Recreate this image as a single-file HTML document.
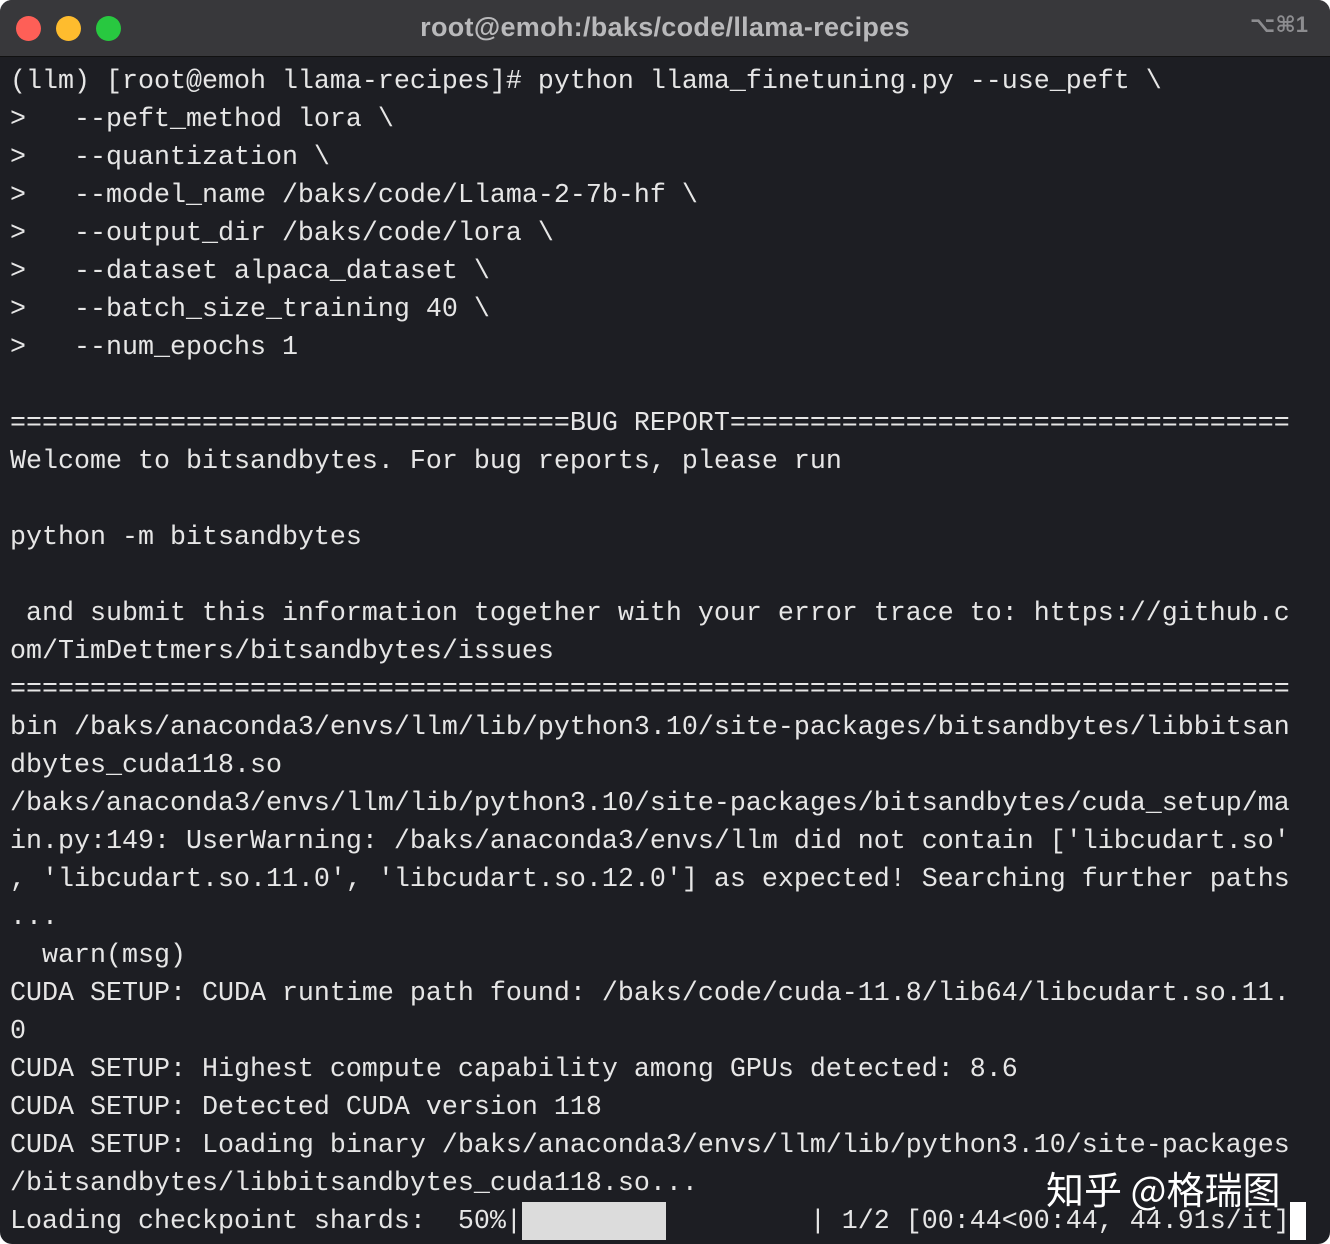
<!DOCTYPE html>
<html><head><meta charset="utf-8"><style>
html,body{margin:0;padding:0;background:#fff;}
.win{position:absolute;left:0;top:0;width:1330px;height:1244px;background:#1d1e23;border-radius:12px;overflow:hidden;}
.tb{position:absolute;left:0;top:0;width:1330px;height:56px;background:#38383b;border-bottom:1px solid #111;}
.dot{position:absolute;top:16px;width:25px;height:25px;border-radius:50%;}
.title{position:absolute;left:0;width:1330px;top:12px;text-align:center;font:bold 27px "Liberation Sans",sans-serif;color:#b9b9bb;letter-spacing:0.3px;}
.kb{position:absolute;right:22px;top:12px;font:bold 22px "Liberation Sans","DejaVu Sans",sans-serif;color:#8d8d90;}
pre{position:absolute;left:10px;top:63px;margin:0;font-family:"Liberation Mono","DejaVu Sans Mono",monospace;font-size:26.67px;line-height:38px;color:#e6e6e6;white-space:pre;}
.bar{position:absolute;left:522px;top:1202px;width:144px;height:38px;background:#dcdcdc;}
.cur{position:absolute;left:1290px;top:1202px;width:16px;height:38px;background:#fff;}
.wm{position:absolute;left:1046px;top:1160px;font:38px "Noto Sans CJK SC",sans-serif;color:#fff;letter-spacing:0px;}
</style></head><body>
<div class="win">
<div class="tb">
<div class="dot" style="left:16px;background:#fe5f57"></div>
<div class="dot" style="left:56px;background:#febc2e"></div>
<div class="dot" style="left:96px;background:#28c840"></div>
<div class="title">root@emoh:/baks/code/llama-recipes</div>
<div class="kb">⌥⌘1</div>
</div>
<pre>(llm) [root@emoh llama-recipes]# python llama_finetuning.py --use_peft \
&gt;   --peft_method lora \
&gt;   --quantization \
&gt;   --model_name /baks/code/Llama-2-7b-hf \
&gt;   --output_dir /baks/code/lora \
&gt;   --dataset alpaca_dataset \
&gt;   --batch_size_training 40 \
&gt;   --num_epochs 1

===================================BUG REPORT===================================
Welcome to bitsandbytes. For bug reports, please run

python -m bitsandbytes

 and submit this information together with your error trace to: https://github.c
om/TimDettmers/bitsandbytes/issues
================================================================================
bin /baks/anaconda3/envs/llm/lib/python3.10/site-packages/bitsandbytes/libbitsan
dbytes_cuda118.so
/baks/anaconda3/envs/llm/lib/python3.10/site-packages/bitsandbytes/cuda_setup/ma
in.py:149: UserWarning: /baks/anaconda3/envs/llm did not contain ['libcudart.so'
, 'libcudart.so.11.0', 'libcudart.so.12.0'] as expected! Searching further paths
...
  warn(msg)
CUDA SETUP: CUDA runtime path found: /baks/code/cuda-11.8/lib64/libcudart.so.11.
0
CUDA SETUP: Highest compute capability among GPUs detected: 8.6
CUDA SETUP: Detected CUDA version 118
CUDA SETUP: Loading binary /baks/anaconda3/envs/llm/lib/python3.10/site-packages
/bitsandbytes/libbitsandbytes_cuda118.so...
Loading checkpoint shards:  50%|                  | 1/2 [00:44&lt;00:44, 44.91s/it]</pre>
<div class="bar"></div>
<div class="cur"></div>
<div class="wm">知乎 @格瑞图</div>
</div>
</body></html>
